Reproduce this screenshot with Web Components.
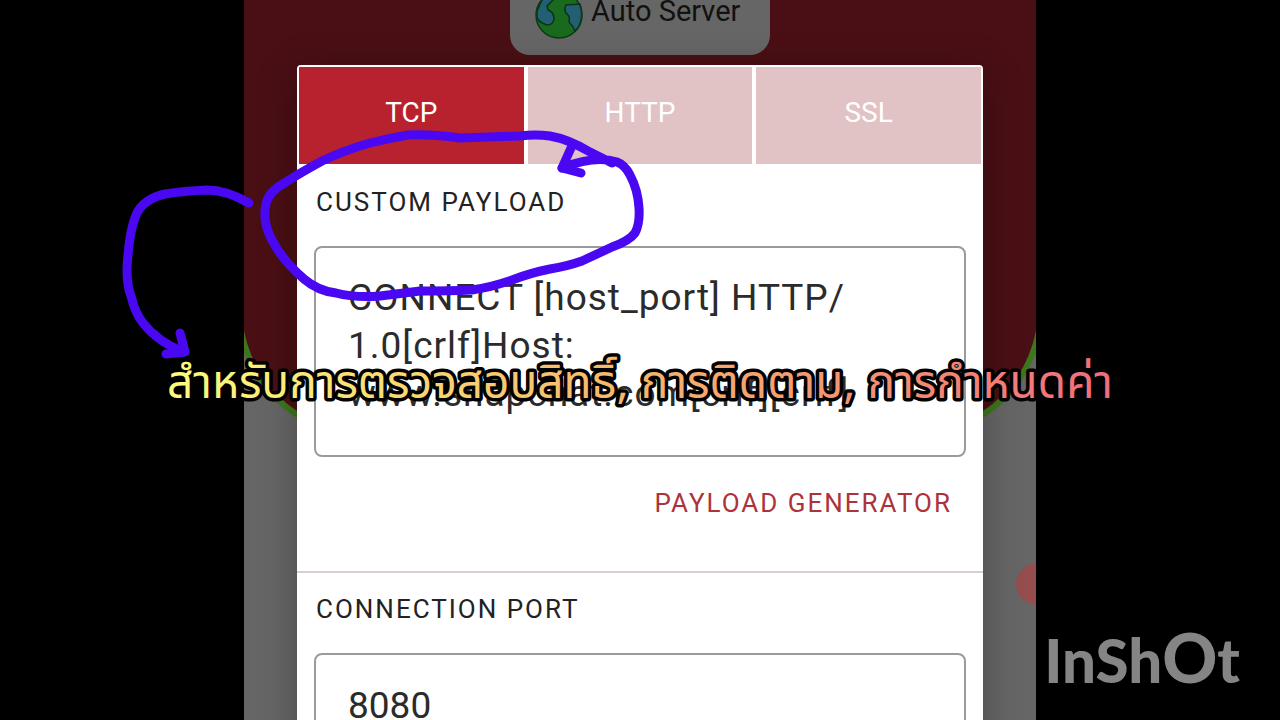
<!DOCTYPE html>
<html lang="en">
<head>
<meta charset="utf-8">
<meta name="viewport" content="width=device-width, initial-scale=1">
<title>Custom payload</title>
<style>
  html, body { margin: 0; height: 100%; background: #000; overflow: hidden; }
  body { font-family: Roboto, "Liberation Sans", sans-serif; }
</style>
</head>
<body>
<video-frame>
  <app-backdrop slot="screen"><server-chip slot="chip">Auto Server</server-chip></app-backdrop>
  <payload-dialog slot="screen">
    <protocol-tabs slot="tabs"></protocol-tabs>
    <form-section label="CUSTOM PAYLOAD">
      <payload-field></payload-field>
      <text-action slot="action">PAYLOAD GENERATOR</text-action>
    </form-section>
    <form-section label="CONNECTION PORT">
      <port-field value="8080"></port-field>
    </form-section>
  </payload-dialog>
  <ink-layer slot="overlay"></ink-layer>
  <video-caption slot="overlay"></video-caption>
  <video-watermark slot="overlay"></video-watermark>
</video-frame>

<script>
const define = (name, html, setup) => {
  const template = document.createElement('template');
  template.innerHTML = html;
  customElements.define(name, class extends HTMLElement {
    constructor() {
      super();
      this.attachShadow({ mode: 'open' }).append(template.content.cloneNode(true));
    }
    connectedCallback() { if (setup) setup(this, this.shadowRoot); }
  });
};

define('video-frame', `
<style>
  :host { display: grid; grid-template-columns: 244fr 792fr 244fr; height: 100vh; position: relative; overflow: hidden; background: #000; }
  .screen { grid-column: 2; display: grid; min-width: 0; min-height: 0; overflow: hidden; background: #666; }
  ::slotted([slot="screen"]) { grid-area: 1 / 1; min-width: 0; }
</style>
<main class="screen"><slot name="screen"></slot></main>
<slot name="overlay"></slot>`);

define('app-backdrop', `
<style>
  :host { display: block; position: relative; }
  .hero { box-sizing: border-box; height: 438px; margin: 0 -8px; display: flex; justify-content: center; align-items: flex-start;
    background: #4a0f14; border: 6px solid #3d761c; border-top: 0; border-radius: 0 0 130px 130px; }
  .fab { position: absolute; right: -24px; top: 563px; width: 44px; height: 42px; border-radius: 50%; background: #954d4d; }
</style>
<div class="hero"><slot name="chip"></slot></div>
<div class="fab"></div>`);

define('server-chip', `
<style>
  :host { display: flex; box-sizing: border-box; width: 260px; height: 55px; padding: 0 25px; gap: 8px; align-items: flex-start;
    border-radius: 0 0 20px 20px; background: #666; color: #111; font-size: 29px; line-height: 22px; white-space: nowrap; }
  svg { flex: none; width: 48px; height: 39px; }
</style>
<svg viewBox="0 9 48 39" aria-hidden="true">
  <circle cx="24" cy="24" r="23" fill="#1a6a1e"/>
  <path d="M2 20L7 9L16 3L18 9L12 15L13 19Q19 21 19 28Q18 34 12 34Q5 32 2 27Z" fill="#235f72" stroke="#0c3218" stroke-width="1.5"/>
  <path d="M31 14L45 13Q49 27 43 37L40 40Q38 35 34 31Q35 25 33 24Q28 20 31 14Z" fill="#235f72" stroke="#0c3218" stroke-width="1.5"/>
  <circle cx="24" cy="24" r="23" fill="none" stroke="#0c3a18" stroke-width="1.5"/>
</svg>
<span><slot></slot></span>`);

define('payload-dialog', `
<style>
  :host { display: block; position: relative; margin: 65px 53px 0; min-height: 700px; background: #fff; border-radius: 4px;
    box-shadow: 0 8px 40px rgba(0,0,0,.28); }
</style>
<div role="dialog" aria-label="Payload settings"><slot name="tabs"></slot><slot></slot></div>`);

define('protocol-tabs', `
<style>
  :host { display: grid; grid-template-columns: repeat(3, 1fr); gap: 4px; padding: 2px 2px 0; }
  button { height: 97px; padding: 0 0 6px; border: 0; background: #e1c2c5; color: #fff; font: 28px/32px Roboto, sans-serif; }
  button[aria-selected="true"] { background: #b8222e; }
</style>
<button role="tab" aria-selected="true">TCP</button>
<button role="tab" aria-selected="false">HTTP</button>
<button role="tab" aria-selected="false">SSL</button>`);

define('form-section', `
<style>
  :host { display: block; padding: 22px 17px 52px; }
  :host(:not(:first-of-type)) { border-top: 2px solid #dccdd0; padding-top: 20px; }
  h2 { margin: 0 2px 28px; color: #222; font-weight: 400; font-size: 26px; line-height: 32px; letter-spacing: 2px; }
</style>
<h2></h2>
<slot></slot>
<slot name="action"></slot>`, (host, root) => {
  root.querySelector('h2').textContent = host.getAttribute('label');
});

const fieldStyle = `
  :host { display: block; }
  textarea, input { display: block; box-sizing: border-box; width: 100%; margin: 0; border: 2px solid #9a9a9a; border-radius: 8px;
    background: #fff; color: #2b2b2b; font: 37px/48px Roboto, sans-serif; outline: 0; }`;

define('payload-field', `
<style>${fieldStyle}
  textarea { height: 211px; padding: 26px 32px; resize: none; overflow: hidden; letter-spacing: 1px; }
</style>
<textarea aria-label="Custom payload" spellcheck="false">CONNECT [host_port] HTTP/
1.0[crlf]Host:
www.snapchat.com[crlf][crlf]</textarea>`);

define('port-field', `
<style>${fieldStyle}
  input { height: 104px; padding: 0 32px; }
</style>
<input type="text" inputmode="numeric" aria-label="Connection port">`, (host, root) => {
  root.querySelector('input').value = host.getAttribute('value');
});

define('text-action', `
<style>
  :host { display: flex; justify-content: flex-end; padding: 30px 14px 0 0; }
  button { padding: 0; border: 0; background: none; color: #ad333b; font: 26px/32px Roboto, sans-serif; letter-spacing: 2px; }
</style>
<button><slot></slot></button>`);

define('ink-layer', `
<style>
  :host { display: block; position: absolute; inset: 0; pointer-events: none; }
  svg { display: block; width: 100%; height: 100%; }
</style>
<svg viewBox="0 0 1280 720" fill="none" stroke="#4a08f2" stroke-width="9" stroke-linecap="round" stroke-linejoin="round" aria-hidden="true">
  <path d="M612 163Q600 157 590 152Q568 139 550 136Q535 134 520 136L460 138Q430 134 408 135Q390 138 370 143Q345 150 322 161Q300 173 286 182Q268 192 266 204Q262 222 272 240Q282 260 304 279Q318 291 336 293Q355 298 380 296L420 291Q450 291 472 290Q492 287 512 280Q530 273 550 269Q568 266 582 261L612 247Q629 241 635 233Q640 224 639 208Q638 190 630 175Q625 165 617 162Q595 155 562 168"/>
  <path d="M571 148L562 168L581 173"/>
  <path d="M249 203Q226 190 207 190Q183 191 165 194Q143 199 136 215Q130 230 128 255Q125 280 131 296Q135 313 143 323Q157 341 183 352"/>
  <path d="M180 333L185 352L166 354"/>
</svg>`);

define('video-caption', `
<style>
  :host { display: block; position: absolute; inset: 0; pointer-events: none; }
  svg { display: block; width: 100%; height: 100%; }
  text { font-family: "Noto Sans Thai", "Noto Sans", sans-serif; font-size: 46px; paint-order: stroke fill; stroke: #000; stroke-width: 7px; stroke-linejoin: round; }
</style>
<svg viewBox="0 0 1280 720">
  <defs><linearGradient id="glow" gradientUnits="userSpaceOnUse" x1="162" y1="0" x2="1118" y2="0">
    <stop offset="0" stop-color="#fbff7c"/><stop offset=".5" stop-color="#f5b46c"/><stop offset="1" stop-color="#f26b7c"/>
  </linearGradient></defs>
  <text x="640" y="398" text-anchor="middle" fill="url(#glow)" lang="th">สำหรับการตรวจสอบสิทธิ์, การติดตาม, การกำหนดค่า</text>
</svg>`);

define('video-watermark', `
<style>
  :host { display: block; position: absolute; right: 40px; bottom: 24px; color: #858585; font: 900 60px/72px Lato, sans-serif; }
  .ring { font-size: 68px; line-height: 1; }
</style>
<span>InSh<span class="ring">O</span>t</span>`);
</script>
</body>
</html>
